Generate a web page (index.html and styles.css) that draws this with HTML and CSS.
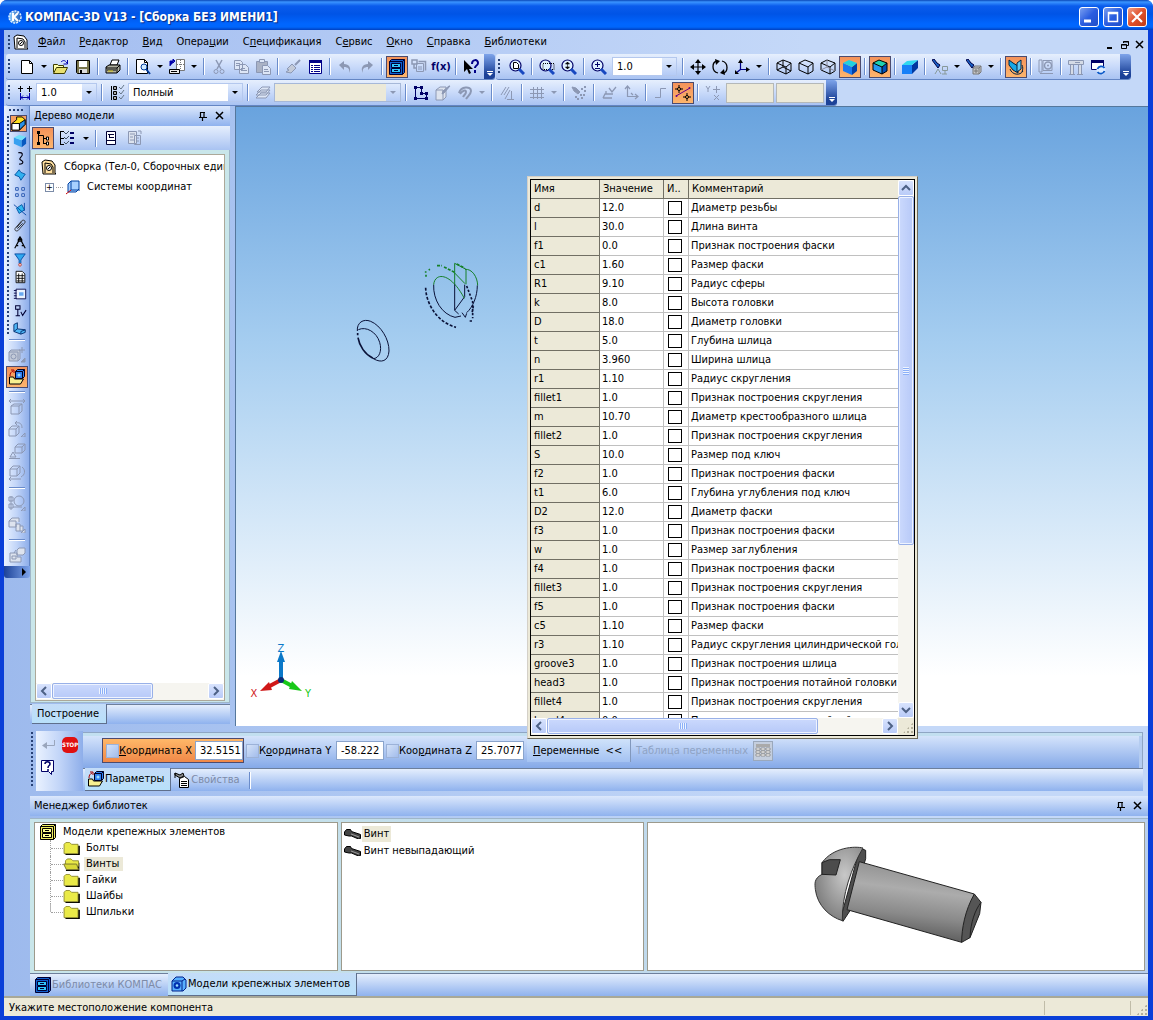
FILE: index.html
```html
<!DOCTYPE html>
<html lang="ru">
<head>
    <meta charset="UTF-8">
    <meta name="viewport" content="width=device-width, initial-scale=1.0">
    <title>КОМПАС-3D V13 - [Сборка БЕЗ ИМЕНИ1]</title>
    <link rel="stylesheet" href="styles.css">
</head>
<body>
    <!-- Icon sprite -->
    <svg class="sprite" aria-hidden="true">
        <defs>
            <linearGradient id="g-ball"><stop offset="0" stop-color="#8fd0ff"/><stop offset="1" stop-color="#1a58b8"/></linearGradient>
            <linearGradient id="g-shank" x1="0.6" y1="0" x2="0.4" y2="1"><stop offset="0" stop-color="#8a8a8a"/><stop offset="0.35" stop-color="#acacac"/><stop offset="0.65" stop-color="#8a8a8a"/><stop offset="1" stop-color="#505050"/></linearGradient>
            <radialGradient id="g-head" cx="0.62" cy="0.38" r="0.6"><stop offset="0" stop-color="#c8c8c8"/><stop offset="1" stop-color="#848484"/></radialGradient>
        </defs>
        <symbol id="logo" viewBox="0 0 16 16"><circle cx="8" cy="8" r="6" fill="url(#g-ball)" stroke="#dff1ff" stroke-width="1.5" stroke-dasharray="2 1"/><path d="M6 4v8M11 4l-4 4 4 4" stroke="#fff" stroke-width="2" fill="none"/></symbol>
        <symbol id="doc3d" viewBox="0 0 16 16"><path d="M1 3l3-2 7 1 3 4v8l1 1H2z" fill="#fff" stroke="#000"/><path d="M4 4v10M4 4l6 1 2 3v6" fill="none" stroke="#000"/><circle cx="8" cy="9" r="2.500" fill="none" stroke="#000"/><path d="M7 10l2-2" stroke="#000"/></symbol>
        <symbol id="doc3d-y" viewBox="0 0 16 16"><path d="M1 3l3-2 7 1 3 4v8l1 1H2z" fill="#ffe0a0" stroke="#000"/><path d="M4 4v10M4 4l6 1 2 3v6" fill="none" stroke="#000"/><circle cx="8" cy="9" r="2.500" fill="#fff" stroke="#000"/><path d="M7 10l2-2" stroke="#000"/></symbol>
        <symbol id="new" viewBox="0 0 16 16"><path d="M2.500 1.500h8l3 3v10h-11z" fill="#fff" stroke="#000"/><path d="M10.500 1.500v3h3" fill="none" stroke="#000"/></symbol>
        <symbol id="open" viewBox="0 0 16 16"><path d="M.5 13.500v-8h4l1 1h5v2" fill="#ffffb0" stroke="#3c3c00"/><path d="M.5 14.500l3-6h11l-3 6z" fill="#e8e070" stroke="#3c3c00"/><path d="M8 3c2-2 4-2 6 1M14.500 1v4h-4" fill="none" stroke="#00a"/></symbol>
        <symbol id="save" viewBox="0 0 16 16"><path d="M1.500 1.500h13v13h-12l-1-1z" fill="#77744a" stroke="#000"/><path d="M4 2h8v6H4z" fill="#fff"/><path d="M4 10h8v4H4z" fill="#ddd"/><path d="M5 11h2v3H5z"/></symbol>
        <symbol id="print" viewBox="0 0 16 16"><path d="M5 6l2-5h7l-2 5z" fill="#fff" stroke="#000"/><path d="M1 8l3-2h11v5l-3 3H1z" fill="#b0b0a0" stroke="#000"/><path d="M1 9h11v5M12 9l3-3M2 11h9" fill="none" stroke="#000"/><path d="M3 11.500h5v1H3z" fill="#e0d020"/></symbol>
        <symbol id="preview" viewBox="0 0 16 16"><path d="M1.500.5h8l3 3v11h-11z" fill="#fff" stroke="#000"/><path d="M9.500.5v3h3" fill="none" stroke="#000"/><circle cx="9" cy="8" r="3" fill="#cfeaff" stroke="#003a9a"/><path d="M11 10l4 5" stroke="#003a9a" stroke-width="2"/></symbol>
        <symbol id="plot" viewBox="0 0 16 16"><path d="M7.500.5h8v11h-8z" fill="#fff" stroke="#777"/><path d="M11.500 1v10M8 5.500h7" stroke="#777" stroke-dasharray="1 1"/><path d="M1 7V2h5M4 0v4l2-2z" fill="#00a" stroke="#00a"/><path d="M.5 10.500h10v4H.5z" fill="#eee" stroke="#000"/><path d="M2 12.500h6" stroke="#000"/></symbol>
        <symbol id="cut" viewBox="0 0 16 16"><path d="M5 1l5 9M11 1L6 10" stroke="currentColor" stroke-width="1.500"/><circle cx="5" cy="12.500" r="2" fill="none" stroke="currentColor"/><circle cx="11" cy="12.500" r="2" fill="none" stroke="currentColor"/></symbol>
        <symbol id="copy" viewBox="0 0 16 16"><path d="M1.500 1.500h6l2 2v7h-8zM6.500 5.500h6l3 3v6h-9z" fill="#dde6f6" stroke="currentColor"/><path d="M3 4.500h4M3 6.500h3M8 9.500h4M8 11.500h6" stroke="currentColor"/></symbol>
        <symbol id="paste" viewBox="0 0 16 16"><path d="M1.500 2.500h11v11h-11z" fill="#aab2c4" stroke="currentColor"/><path d="M4.500.5h5v3h-5z" fill="#dde6f6" stroke="currentColor"/><path d="M7.500 6.500h5l3 3v6h-8z" fill="#dde6f6" stroke="currentColor"/><path d="M9 10.500h4M9 12.500h5" stroke="currentColor"/></symbol>
        <symbol id="brush" viewBox="0 0 16 16"><path d="M15 1l-5 5" stroke="currentColor" stroke-width="2"/><path d="M7 5l4 4-5 5-5-1 3-2-2-1z" fill="#c3cad8" stroke="currentColor"/></symbol>
        <symbol id="props" viewBox="0 0 16 16"><path d="M2.500 1.500h12v13h-12z" fill="#fff" stroke="#008"/><path d="M2 1h13v3H2z" fill="#008"/><path d="M4 6.500h2M7 6.500h6M4 8.500h2M7 8.500h6M4 10.500h2M7 10.500h6M4 12.500h2M7 12.500h6" stroke="#008"/></symbol>
        <symbol id="undo" viewBox="0 0 16 16"><path d="M2 6l5-4v3c5 0 8 4 5 9 1-4-1-6-5-6v3z" fill="currentColor"/></symbol>
        <symbol id="redo" viewBox="0 0 16 16"><path d="M14 6L9 2v3c-5 0-8 4-5 9-1-4 1-6 5-6v3z" fill="currentColor"/></symbol>
        <symbol id="lib" viewBox="0 0 16 16"><path d="M.5 2.500l2-2h13v13l-2 2H.5z" fill="#1060d0" stroke="#003"/><path d="M.5 2.500h13v13M13.500 2.500l2-2" fill="none" stroke="#003"/><path d="M2.500 4.500h9v4h-9zM2.500 9.500h9v4h-9z" fill="#30c8ff" stroke="#003"/><path d="M5 6.500h4M5 11.500h4" stroke="#003"/></symbol>
        <symbol id="lib-y" viewBox="0 0 16 16"><path d="M.5 2.500l2-2h13v13l-2 2H.5z" fill="#f0ec60" stroke="#000"/><path d="M.5 2.500h13v13M13.500 2.500l2-2" fill="none" stroke="#000"/><path d="M2.500 4.500h9v4h-9zM2.500 9.500h9v4h-9z" fill="#ffff90" stroke="#000"/><path d="M5 6.500h4M5 11.500h4" stroke="#000"/></symbol>
        <symbol id="vars" viewBox="0 0 16 16"><path d="M5.500 4.500h7v8h-7z" fill="none" stroke="currentColor"/><path d="M7.500 2.500h7v9M1 1h5v4H1zM3 5v4h3" fill="none" stroke="currentColor" stroke-width="1.500"/><path d="M7 7h4v4H7z" fill="currentColor" opacity=".5"/></symbol>
        <symbol id="help" viewBox="0 0 16 16"><path d="M1 1v12l3-3 2 5 2-1-2-4h4z"/><path d="M9 5c0-5 6-5 6-1 0 3-3 2-3 5M12 11v3" fill="none" stroke="#008" stroke-width="2"/></symbol>
        <symbol id="zoom-doc" viewBox="0 0 16 16"><circle cx="6.500" cy="6.500" r="5.500" fill="#dff0ff" stroke="#006" stroke-width="1.200"/><path d="M4.500 3.500h3l2 2v4h-5z" fill="#fff" stroke="#000"/><path d="M10 10l5 5" stroke="#1848c0" stroke-width="3"/></symbol>
        <symbol id="zoom-rect" viewBox="0 0 16 16"><circle cx="6.500" cy="6.500" r="5.500" fill="#dff0ff" stroke="#006" stroke-width="1.200"/><path d="M4 4.500h11v6H4z" fill="none" stroke="#000" stroke-dasharray="1 1"/><path d="M10 10l5 5" stroke="#1848c0" stroke-width="3"/></symbol>
        <symbol id="zoom-ud" viewBox="0 0 16 16"><circle cx="6.500" cy="6.500" r="5.500" fill="#dff0ff" stroke="#006" stroke-width="1.200"/><path d="M6.500 3v7M4.500 5l2-2 2 2zM4.500 8l2 2 2-2z" stroke="#000" stroke-width=".6"/><path d="M10 10l5 5" stroke="#1848c0" stroke-width="3"/></symbol>
        <symbol id="zoom-pm" viewBox="0 0 16 16"><circle cx="6.500" cy="6.500" r="5.500" fill="#dff0ff" stroke="#006" stroke-width="1.200"/><path d="M6.500 3v5M4 5.500h5M4 9.500h5" stroke="#006"/><path d="M10 10l5 5" stroke="#1848c0" stroke-width="3"/></symbol>
        <symbol id="move" viewBox="0 0 16 16"><path d="M8 2v12M2 8h12" stroke="#000" stroke-width="1.200"/><path d="M5 4l3-4 3 4zM5 12l3 4 3-4zM4 5L0 8l4 3zM12 5l4 3-4 3z"/></symbol>
        <symbol id="rotate" viewBox="0 0 16 16"><path d="M6 14C-1 12 0 3 5 2M10 2c7 2 6 11 1 12" fill="none" stroke="#000" stroke-width="1.300"/><path d="M3 0l5 2-4 4zM13 16l-5-2 4-4z"/></symbol>
        <symbol id="axes" viewBox="0 0 16 16"><path d="M6.500 2v8.500H14M6.500 10.500L2 14" fill="none" stroke="#008" stroke-width="1.200"/><path d="M4 4l2.500-4L9 4zM12 8l4 2.500-4 2.500zM1 15v-4l4 4z"/></symbol>
        <symbol id="cube-w" viewBox="0 0 16 16"><path d="M1 4l6-3 8 3v8l-5 3-9-4zM1 4l9 4 5-4M10 8v7M7 1v7l8 4M7 8l-6 3" fill="none" stroke="#000"/></symbol>
        <symbol id="cube-n" viewBox="0 0 16 16"><path d="M1 4l6-3 8 3v8l-5 3-9-4zM1 4l9 4 5-4M10 8v7" fill="none" stroke="#000"/></symbol>
        <symbol id="cube-d" viewBox="0 0 16 16"><path d="M1 4l6-3 8 3v8l-5 3-9-4zM1 4l9 4 5-4M10 8v7" fill="none" stroke="#000"/><path d="M7 1v7l8 4M7 8l-6 3" fill="none" stroke="#889"/></symbol>
        <symbol id="cube-s" viewBox="0 0 16 16"><path d="M1 4l9 4v8l-9-4z" fill="#1878f0"/><path d="M10 8l5-4v8l-5 4z" fill="#0040a8"/><path d="M1 4l6-3 8 3-5 4z" fill="#20d0e0"/></symbol>
        <symbol id="cube-e" viewBox="0 0 16 16"><path d="M1 4l9 4v7l-9-4z" fill="#2898f0"/><path d="M10 8l5-4v8l-5 3z" fill="#0050b8"/><path d="M1 4l6-3 8 3-5 4z" fill="#20d0b0"/><path d="M1 4l6-3 8 3v8l-5 3-9-4zM1 4l9 4 5-4M10 8v7" fill="none" stroke="#000"/></symbol>
        <symbol id="persp" viewBox="0 0 16 16"><path d="M0 6h10v9H0z" fill="#1880f8"/><path d="M10 6l6-5v8l-6 6z" fill="#0038a0"/><path d="M0 6l5-4 11-1-6 5z" fill="#30d8f0"/></symbol>
        <symbol id="torch" viewBox="0 0 16 16"><path d="M0 1l2-1 3 4 3 2-2 3-3-4z" fill="#1860c8" stroke="#004"/><path d="M10.500 7.500h5v4h-5zM13 11v4M10 15h5M3 15l3-5 3 5" fill="none" stroke="#899"/></symbol>
        <symbol id="torch2" viewBox="0 0 16 16"><path d="M0 1l2-1 3 4 3 2-2 3-3-4z" fill="#1860c8" stroke="#004"/><path d="M7 9l2-2h6v6l-2 2H7zM7 9h6v6M13 9l2-2M9 11h2v2H9z" fill="#c8c8c8" stroke="#777"/></symbol>
        <symbol id="explode" viewBox="0 0 16 16"><path d="M1 1l4 3 5 3v7l-5-3-4-5z" fill="#18a8e8" stroke="#024"/><path d="M9 4l4-3v9l-4 3z" fill="#60c8f4" stroke="#024"/><path d="M2 10c2 6 10 7 13 2M14 6c1 2 1 4 0 7" fill="none" stroke="#024"/></symbol>
        <symbol id="gear" viewBox="0 0 16 16"><path d="M1 1h3v12H1zM5 1.500h9v10H5zM2 14.500h13" fill="none" stroke="currentColor"/><circle cx="10" cy="6.500" r="3.500" fill="none" stroke="currentColor" stroke-width="1.500"/><circle cx="10" cy="6.500" r="1" fill="currentColor"/></symbol>
        <symbol id="crane" viewBox="0 0 16 16"><path d="M.5 1.500h15v4H.5zM2.500 5.500h3v10h-3zM10.500 5.500h3v10h-3zM1 15.500h6M9 15.500h6M7 3.500h5" fill="#d5dbe6" stroke="currentColor"/></symbol>
        <symbol id="refresh" viewBox="0 0 16 16"><path d="M1.500 1.500h12v9h-12z" fill="#fff" stroke="#006"/><path d="M1 1h13v3H1z" fill="#006"/><circle cx="11" cy="11" r="4.500" fill="#dcebff"/><path d="M7.500 10a4 4 0 0 1 7-1M14.500 12a4 4 0 0 1-7 1" fill="none" stroke="#0a58c8" stroke-width="1.800"/></symbol>

        <symbol id="step" viewBox="0 0 16 16"><path d="M3.500 1v6M1 3.500h5M12.500 1v6M10 3.500h5" stroke="#000"/><path d="M3.500 8v7M12.500 8v7M4 12.500h8M6 10.500l-2 2 2 2M10 10.500l2 2-2 2" fill="none" stroke="#00a"/></symbol>
        <symbol id="levels" viewBox="0 0 16 16"><path d="M2.500 1v14" stroke="#000"/><path d="M4.500 1.500h3v3h-3zM4.500 6.500h3v3h-3zM4.500 11.500h3v3h-3z" fill="#aaa" stroke="#000"/><path d="M10 2l2 2 3-4M10 7l2 2 3-4M10 12l2 2 3-4" fill="none" stroke="#678"/></symbol>
        <symbol id="layers" viewBox="0 0 16 16"><path d="M1 13l5-5h9l-4 5zM1 10l5-5h9l-4 5zM2 7l5-5h8l-4 5z" fill="#dde6f6" stroke="currentColor"/></symbol>
        <symbol id="sketch" viewBox="0 0 16 16"><path d="M2.500 2.500h6v6h5v5h-11z" fill="none" stroke="#006"/><path d="M1 1h3v3H1zM7 1h3v3H7zM7 7h3v3H7zM12 7h3v3h-3zM1 12h3v3H1zM12 12h3v3h-3z" fill="#006"/></symbol>
        <symbol id="edit" viewBox="0 0 16 16"><path d="M1 5l4-3h6v10l-3 3H1zM1 5h7v10" fill="#dde3ee" stroke="currentColor"/><path d="M15 1l-6 7-2 1 1-3 6-5z" fill="currentColor" stroke="currentColor"/></symbol>
        <symbol id="magnet" viewBox="0 0 16 16"><path d="M2 8C4 1 14 1 14 6c0 3-3 5-5 8M3 9c2-3 6-5 6-2 0 2-2 3-3 5" fill="none" stroke="currentColor" stroke-width="2"/></symbol>
        <symbol id="round" viewBox="0 0 16 16"><path d="M2 10l5-8M5 10l5-8M6 14l5-9M12.500 6v8M8 14.500h7" fill="none" stroke="currentColor"/></symbol>
        <symbol id="grid" viewBox="0 0 16 16"><path d="M4.500 2v12M8.500 2v12M12.500 2v12M1 4.500h14M1 8.500h14M1 12.500h14" stroke="currentColor"/></symbol>
        <symbol id="spray" viewBox="0 0 16 16"><path d="M1 2l4 1 4 4-2 2-4-3z" fill="currentColor" stroke="currentColor"/><path d="M10 4h2M13 6h2M9 10h2M12 10h2M10 13h2M6 14h2M13 2h2M4 12h2" stroke="currentColor" stroke-width="2"/></symbol>
        <symbol id="plane" viewBox="0 0 16 16"><path d="M2 13h9M2 13l2-4h8M5 9V6M8 3l3 4 4-5" fill="none" stroke="currentColor" stroke-width="1.300"/></symbol>
        <symbol id="lcs" viewBox="0 0 16 16"><path d="M4.500 2v9.500H15M2 4l2.500-3L7 4M12 9l3 2.500-3 2.500M8 8l2 2" fill="none" stroke="currentColor" stroke-width="1.200"/></symbol>
        <symbol id="ortho" viewBox="0 0 16 16"><path d="M2 12.500h5.500v-9H13" fill="none" stroke="currentColor"/></symbol>
        <symbol id="snap" viewBox="0 0 16 16"><path d="M4 0v8M0 4h8M12 8v8M8 12h8" stroke="#000"/><circle cx="4" cy="4" r="1.500" fill="#ffb060" stroke="#000"/><circle cx="12" cy="12" r="1.500" fill="#ffb060" stroke="#000"/><path d="M1 11l14-8" fill="none" stroke="#608"/><circle cx="1.500" cy="11" r="1" fill="#608"/><circle cx="14.500" cy="3" r="1" fill="#608"/></symbol>
        <symbol id="xy" viewBox="0 0 16 16"><path d="M1 1l2 3 2-3M3 4v3M9 10l5 5M14 10l-5 5M11.500 1v7M8 4.500h7" fill="none" stroke="currentColor"/></symbol>

        <symbol id="r-edit" viewBox="0 0 16 16"><path d="M1 8l5-4v-3h6l3 3v5l-6 6H1z" fill="#ffe020" stroke="#000"/><path d="M1 8h8v7H1z" fill="#fff" stroke="#000"/><path d="M9 8l6-4v5l-6 6z" fill="#2890e8" stroke="#000"/></symbol>
        <symbol id="r-solid" viewBox="0 0 16 16"><path d="M1 4l9 3v8l-9-4z" fill="#38a0f0"/><path d="M10 7l5-4v8l-5 4z" fill="#0858c0"/><path d="M1 4l6-3 8 2-5 4z" fill="#70e0f8"/></symbol>
        <symbol id="r-curve" viewBox="0 0 16 16"><path d="M6 2c5-1 6 2 3 5s0 3 2 5c1 2-1 3-4 3" fill="none" stroke="#001" stroke-width="1.300"/></symbol>
        <symbol id="r-surf" viewBox="0 0 16 16"><path d="M2 8l5-6 2 3 5 2-5 7-2-4z" fill="#30b0f0" stroke="#0050a0"/></symbol>
        <symbol id="r-arr" viewBox="0 0 16 16"><path d="M3 3h3v3H3zM10 3h3v3h-3zM3 10h3v3H3zM10 10h3v3h-3z" fill="#d0e4ff" stroke="#1848a8"/></symbol>
        <symbol id="r-aux" viewBox="0 0 16 16"><path d="M4 7l6-4 3 6-6 4z" fill="#30b8f0" stroke="#0050a0"/><path d="M1 3l14 12M13 1v9" stroke="#0040a0"/></symbol>
        <symbol id="r-clip" viewBox="0 0 16 16"><path d="M13 5l-7 8c-3 2-5-1-3-3l7-8c3-2 5 1 3 3M11 5l-6 6M10 3L4 10" fill="none" stroke="#222"/></symbol>
        <symbol id="r-meas" viewBox="0 0 16 16"><path d="M8 3L2 14M8 3l6 11M6 4l2-3 2 3v2H6zM4 11h2M10 11h2" fill="none" stroke="#000" stroke-width="1.300"/></symbol>
        <symbol id="r-filt" viewBox="0 0 16 16"><path d="M2 1h12l-5 7v4H7V8z" fill="#30a8f0" stroke="#0048a0"/><circle cx="8" cy="13.500" r="1.500" fill="#fff" stroke="#c03020"/></symbol>
        <symbol id="r-spec" viewBox="0 0 16 16"><path d="M3.500 1.500h7l3 3v10h-10z" fill="#fff" stroke="#000"/><path d="M4 6.500h9M4 9.500h9M4 12.500h9M6.500 4v10M10.500 4v10" stroke="#000"/></symbol>
        <symbol id="r-rep" viewBox="0 0 16 16"><path d="M3.500 2.500h11v11h-11z" fill="#eaf3ff" stroke="#004"/><path d="M1 4h3M1 7h3M1 10h3M1 13h3" stroke="#004"/><path d="M7 6h5v4H7z" fill="#68a8f0"/></symbol>
        <symbol id="r-dim" viewBox="0 0 16 16"><path d="M3 2h5v4H3zM5.500 6v7M3 13.500h5M9 9l2 4 4-6" fill="none" stroke="#003" stroke-width="1.200"/></symbol>
        <symbol id="r-sheet" viewBox="0 0 16 16"><path d="M1 4l4-2v7l9 1v3l-5 2-8-3z" fill="#50b8f8" stroke="#002868"/><path d="M5 9l-4 3M9 15v-3l5-2" fill="none" stroke="#002868"/></symbol>
        <symbol id="r-addd" viewBox="0 0 18 16"><path d="M1 5l2-2h9v9l-2 2H1zM1 5h9v9" fill="#c3cad8" stroke="currentColor"/><circle cx="5.500" cy="9.500" r="2.500" fill="none" stroke="currentColor"/><path d="M14 0v6M11 3h6M17 11v4h-4z" stroke="currentColor" fill="currentColor"/></symbol>
        <symbol id="addf" viewBox="0 0 16 16"><path d="M.5 15V8h4l1 2h9l-3 5z" fill="#f8f090" stroke="#000"/><path d="M6.500 2.500l2-2h7v7l-2 2h-7z" fill="#3080f0" stroke="#002"/><path d="M6.500 2.500h7v7M13.500 2.500l2-2" fill="none" stroke="#002"/><circle cx="10" cy="6" r="1.500" fill="#9df"/><path d="M1 7c0-3 1-4 3-5M2 1h3v3" fill="none" stroke="#a00"/></symbol>
        <symbol id="b-dist" viewBox="0 0 18 16"><path d="M3 7l3-2h8v7l-3 3H3zM3 7h8v8M11 7l3-2M1 2h16M3 0L1 2l2 2M15 0l2 2-2 2" fill="none" stroke="currentColor"/></symbol>
        <symbol id="b-rot" viewBox="0 0 18 16"><path d="M1 8l3-3h7v7l-3 3H1zM1 8h7v7M8 8l3-3M8 2c4-1 6 1 6 5M9 0L7 2l2 2M17 12v4h-4z" fill="none" stroke="currentColor"/></symbol>
        <symbol id="b-fix" viewBox="0 0 18 16"><path d="M7 4l3-3h7v6l-3 3H7zM7 4h7v6M14 4l3-3M5 9l-3 5h6zM1 15.500h11" fill="none" stroke="currentColor"/></symbol>
        <symbol id="b-move" viewBox="0 0 18 16"><path d="M2 4l3-3h7v7l-3 3H2zM2 4h7v7M9 4l3-3M14 2c4 3 3 8-1 10M1 14h12M3 12l-2 2 2 2" fill="none" stroke="currentColor"/></symbol>
        <symbol id="b-mate" viewBox="0 0 18 16"><circle cx="11" cy="6" r="5" fill="none" stroke="currentColor"/><path d="M1 2h4v4H1zM1 9h4v4H1zM3 1v14M17 12v4h-4zM5 12h9" fill="none" stroke="currentColor"/></symbol>
        <symbol id="b-cut" viewBox="0 0 18 16"><path d="M1 4l3-3h7v4M1 4h7v6H1zM8 7h4v7H8zM12 9h3v5h-3M17 12v4h-4z" fill="#dde3ee" stroke="currentColor"/></symbol>
        <symbol id="b-new" viewBox="0 0 18 16"><path d="M2 6h7v4h4v5H2zM4 9h4v3H4zM6 6l2-3M9 3l2-2h6v5l-2 2H9z" fill="#dde3ee" stroke="currentColor"/></symbol>

        <symbol id="tree" viewBox="0 0 16 16"><path d="M3.500 2v12M3.500 5.500h5v8M8 8.500h3M8 13.500h3" fill="none" stroke="#000"/><path d="M2 1h3v3H2zM2 12h3v3H2z" fill="#000"/><path d="M11.500 7h2v3h-2zM11.500 12h2v3h-2z" fill="#fff" stroke="#000"/></symbol>
        <symbol id="checks" viewBox="0 0 16 16"><path d="M1.500 1v14M1 1.500h4M1 8.500h4M1 14.500h4" stroke="#000"/><path d="M5 2l2 2 3-3M5 7l2 2 3-3M5 12l2 2 3-3" fill="none" stroke="#456"/><path d="M11 3h4M11 8h4M11 13h4" stroke="#006" stroke-width="2"/></symbol>
        <symbol id="sheet" viewBox="0 0 16 16"><path d="M3.500 1.500h9v13h-9z" fill="#fff" stroke="#003"/><path d="M3 10.500h10M5 4.500h3M6.500 4v4M7 7.500h4M8 4.500h3" stroke="#003"/></symbol>
        <symbol id="report" viewBox="0 0 16 16"><path d="M1.500 1.500h8v12h-8z" fill="#dde3ee" stroke="currentColor"/><path d="M3 4h5M3 7h3M3 10h5M7.500 5.500h6v9h-6zM9 8h3M9 11h3M11 1h3v3" fill="none" stroke="currentColor"/></symbol>
        <symbol id="cs" viewBox="0 0 16 16"><path d="M3 5l3-3h8v8l-3 3H3z" fill="#a8d0ff" stroke="#0040a0"/><path d="M6 2v9H15" fill="none" stroke="#0040a0"/><path d="M6 11l-5 4" stroke="#c00"/></symbol>
        <symbol id="pin" viewBox="0 0 10 10"><path d="M2.500 1v5M2 1.500h5M6 1v5M1 6.500h8M4.500 7v3" fill="none" stroke="#000" stroke-width="1.200"/></symbol>
        <symbol id="x" viewBox="0 0 10 10"><path d="M1 1l7 7M8 1L1 8" stroke="currentColor" stroke-width="1.500"/></symbol>
        <symbol id="left" viewBox="0 0 10 10"><path d="M7 1L3 5l4 4" fill="none" stroke="#4d6185" stroke-width="2"/></symbol>
        <symbol id="right" viewBox="0 0 10 10"><path d="M3 1l4 4-4 4" fill="none" stroke="#4d6185" stroke-width="2"/></symbol>
        <symbol id="up" viewBox="0 0 10 10"><path d="M1 7l4-4 4 4" fill="none" stroke="#4d6185" stroke-width="2"/></symbol>
        <symbol id="down" viewBox="0 0 10 10"><path d="M1 3l4 4 4-4" fill="none" stroke="#4d6185" stroke-width="2"/></symbol>
        <symbol id="enter" viewBox="0 0 16 16"><path d="M14.500 3v5.500H6" fill="none" stroke="#9aa6bc"/><path d="M7 5v7L2 8.500z" fill="#9aa6bc"/></symbol>
        <symbol id="query" viewBox="0 0 16 16"><path d="M1.500 1.500h12v11h-2v3l-3-3h-7z" fill="#fff" stroke="#006"/><path d="M5 5c0-3 5-3 5 0 0 2-2 1-2 4M8 10v2" fill="none" stroke="#006" stroke-width="1.500"/></symbol>
        <symbol id="tabprop" viewBox="0 0 16 16"><path d="M1 1l5 2 3-2 1 3-4 2-5-3z" fill="#888" stroke="#000"/><path d="M5.500 6.500l5-2 4 3v8h-9z" fill="#fff" stroke="#000"/><path d="M7 9.500h6M7 11.500h6M7 13.500h6M1 1v5" stroke="#000"/></symbol>
        <symbol id="table" viewBox="0 0 16 16"><path d="M1 1h14v3H1z" fill="#aaa"/><path d="M1 5h4v2H1zM6 5h4v2H6zM11 5h4v2h-4zM1 8h4v2H1zM6 8h4v2H6zM11 8h4v2h-4zM1 11h4v2H1zM6 11h4v2H6zM11 11h4v2h-4z" fill="#fff" stroke="#888" stroke-width=".8"/></symbol>
        <symbol id="folder" viewBox="0 0 17 14"><path d="M2 13.500h14.500V4" fill="none" stroke="#000" stroke-width="2"/><path d="M.5 12.500v-10l2-2h4l2 2h7v10z" fill="#eaea48" stroke="#908c30"/></symbol>
        <symbol id="folder-o" viewBox="0 0 18 14"><path d="M3 13.500h13.500V5" fill="none" stroke="#000" stroke-width="2"/><path d="M2.500 7v-4l2-2h4l2 2h6v6z" fill="#eaea48" stroke="#908c30"/><path d="M.5 6.500h14l2 6h-13z" fill="#d8d838" stroke="#77732c"/></symbol>
        <symbol id="bolt" viewBox="0 0 17 10"><path d="M.5 3l2-2.500h4l1 2 9 3v4l-2 .5-7-3H5L.5 6z" fill="#444" stroke="#000"/><path d="M7 5l8 3" stroke="#999"/></symbol>
        <symbol id="model" viewBox="0 0 16 16"><path d="M1 5l4-4h7l3 3v8l-3 3H1z" fill="#58b0ff" stroke="#00218a"/><path d="M1 5h10v10M11 5l3-2" fill="none" stroke="#00218a"/><circle cx="6" cy="9.500" r="3.500" fill="#0030b0"/><circle cx="6" cy="9.500" r="1.300" fill="#9df"/></symbol>
    </svg>

    <div class="window">
        <header class="titlebar">
            <svg class="ic"><use href="#logo"/></svg>
            <h1>КОМПАС-3D V13 - [Сборка БЕЗ ИМЕНИ1]</h1>
            <button class="win-btn" aria-label="Свернуть"><svg viewBox="0 0 18 18"><path d="M4 13h7" stroke="#fff" stroke-width="3"/></svg></button>
            <button class="win-btn" aria-label="Развернуть"><svg viewBox="0 0 18 18"><path d="M4.500 4.500h9v9h-9zM4 5.500h10" fill="none" stroke="#fff" stroke-width="1.500"/></svg></button>
            <button class="win-btn close" aria-label="Закрыть"><svg viewBox="0 0 18 18"><path d="M4 4l10 10M14 4L4 14" stroke="#fff" stroke-width="2.200"/></svg></button>
        </header>

        <nav class="menubar">
            <i class="grip"></i>
            <svg class="ic"><use href="#doc3d"/></svg>
            <a href="#"><u>Ф</u>айл</a>
            <a href="#"><u>Р</u>едактор</a>
            <a href="#"><u>В</u>ид</a>
            <a href="#">Опера<u>ц</u>ии</a>
            <a href="#">С<u>п</u>ецификация</a>
            <a href="#">С<u>е</u>рвис</a>
            <a href="#"><u>О</u>кно</a>
            <a href="#"><u>С</u>правка</a>
            <a href="#"><u>Б</u>иблиотеки</a>
            <span class="mdi">
                <button aria-label="Свернуть окно"><svg viewBox="0 0 10 10"><path d="M2 8h5" stroke="#000" stroke-width="2"/></svg></button>
                <button aria-label="Восстановить окно"><svg viewBox="0 0 10 10"><path d="M3.500 3V1.500h5v4H7M1.500 4.500h5v4h-5zM3 2h6M1 5h6" fill="none" stroke="#000"/></svg></button>
                <button aria-label="Закрыть окно"><svg><use href="#x"/></svg></button>
            </span>
        </nav>

        <div class="bars">
            <div class="toolbar">
                <i class="grip"></i>
                <button class="tb" aria-label="Создать"><svg class="ic"><use href="#new"/></svg></button><i class="dd"></i>
                <button class="tb" aria-label="Открыть"><svg class="ic"><use href="#open"/></svg></button>
                <button class="tb" aria-label="Сохранить"><svg class="ic"><use href="#save"/></svg></button>
                <i class="sep"></i>
                <button class="tb" aria-label="Печать"><svg class="ic"><use href="#print"/></svg></button>
                <i class="sep"></i>
                <button class="tb" aria-label="Просмотр"><svg class="ic"><use href="#preview"/></svg></button><i class="dd"></i>
                <button class="tb" aria-label="Чертеж"><svg class="ic"><use href="#plot"/></svg></button><i class="dd"></i>
                <i class="sep"></i>
                <button class="tb" disabled aria-label="Вырезать"><svg class="ic"><use href="#cut"/></svg></button>
                <button class="tb" disabled aria-label="Копировать"><svg class="ic"><use href="#copy"/></svg></button>
                <button class="tb" disabled aria-label="Вставить"><svg class="ic"><use href="#paste"/></svg></button>
                <i class="sep"></i>
                <button class="tb" disabled aria-label="Копировать свойства"><svg class="ic"><use href="#brush"/></svg></button>
                <button class="tb" aria-label="Свойства"><svg class="ic"><use href="#props"/></svg></button>
                <i class="sep"></i>
                <button class="tb" disabled aria-label="Отменить"><svg class="ic"><use href="#undo"/></svg></button>
                <button class="tb" disabled aria-label="Повторить"><svg class="ic"><use href="#redo"/></svg></button>
                <i class="sep"></i>
                <button class="tb on" aria-label="Менеджер библиотек"><svg class="ic"><use href="#lib"/></svg></button>
                <button class="tb" disabled aria-label="Параметры"><svg class="ic"><use href="#vars"/></svg></button>
                <button class="tb fx" aria-label="Переменные">f(x)</button>
                <i class="sep"></i>
                <button class="tb" aria-label="Справка"><svg class="ic"><use href="#help"/></svg></button>
                <i class="more"></i>
            </div>
            <div class="toolbar">
                <i class="grip"></i>
                <button class="tb" aria-label="Показать все"><svg class="ic"><use href="#zoom-doc"/></svg></button>
                <i class="sep"></i>
                <button class="tb" aria-label="Увеличить рамкой"><svg class="ic"><use href="#zoom-rect"/></svg></button>
                <button class="tb" aria-label="Масштаб"><svg class="ic"><use href="#zoom-ud"/></svg></button>
                <i class="sep"></i>
                <button class="tb" aria-label="Изменить масштаб"><svg class="ic"><use href="#zoom-pm"/></svg></button>
                <span class="combo w-zoom"><select aria-label="Масштаб"><option>1.0</option></select><i class="dd"></i></span>
                <i class="sep"></i>
                <button class="tb" aria-label="Сдвинуть"><svg class="ic"><use href="#move"/></svg></button>
                <button class="tb" aria-label="Повернуть"><svg class="ic"><use href="#rotate"/></svg></button>
                <button class="tb" aria-label="Ориентация"><svg class="ic"><use href="#axes"/></svg></button><i class="dd"></i>
                <i class="sep"></i>
                <button class="tb" aria-label="Каркас"><svg class="ic"><use href="#cube-w"/></svg></button>
                <button class="tb" aria-label="Без невидимых линий"><svg class="ic"><use href="#cube-n"/></svg></button>
                <button class="tb" aria-label="Невидимые линии тонкие"><svg class="ic"><use href="#cube-d"/></svg></button>
                <button class="tb on" aria-label="Полутоновое"><svg class="ic"><use href="#cube-s"/></svg></button>
                <i class="sep"></i>
                <button class="tb on" aria-label="Полутоновое с каркасом"><svg class="ic"><use href="#cube-e"/></svg></button>
                <i class="sep"></i>
                <button class="tb" aria-label="Перспектива"><svg class="ic"><use href="#persp"/></svg></button>
                <i class="sep"></i>
                <button class="tb" aria-label="Скрыть"><svg class="ic"><use href="#torch"/></svg></button><i class="dd"></i>
                <button class="tb" aria-label="Скрыть тела"><svg class="ic"><use href="#torch2"/></svg></button><i class="dd"></i>
                <i class="sep"></i>
                <button class="tb on" aria-label="Упрощения"><svg class="ic"><use href="#explode"/></svg></button>
                <i class="sep"></i>
                <button class="tb" disabled aria-label="Перестроить"><svg class="ic"><use href="#gear"/></svg></button>
                <i class="sep"></i>
                <button class="tb" disabled aria-label="Разнести"><svg class="ic"><use href="#crane"/></svg></button>
                <button class="tb" aria-label="Обновить"><svg class="ic"><use href="#refresh"/></svg></button>
                <i class="more wide-gap"></i>
            </div>
        </div>

        <div class="bars">
            <div class="toolbar compact">
                <i class="grip"></i>
                <button class="tb" aria-label="Шаг курсора"><svg class="ic"><use href="#step"/></svg></button>
                <span class="combo w-step"><select aria-label="Шаг"><option>1.0</option></select><i class="dd"></i></span>
                <i class="sep"></i>
                <button class="tb" aria-label="Тип загрузки"><svg class="ic"><use href="#levels"/></svg></button>
                <span class="combo w-type"><select aria-label="Тип загрузки"><option>Полный</option></select><i class="dd"></i></span>
                <i class="sep"></i>
                <button class="tb" disabled aria-label="Слои"><svg class="ic"><use href="#layers"/></svg></button>
                <span class="combo off w-layer"><select aria-label="Слой" disabled></select><i class="dd"></i></span>
                <i class="sep"></i>
                <button class="tb" aria-label="Эскиз"><svg class="ic"><use href="#sketch"/></svg></button>
                <button class="tb" disabled aria-label="Редактировать"><svg class="ic"><use href="#edit"/></svg></button>
                <button class="tb" disabled aria-label="Привязки"><svg class="ic"><use href="#magnet"/></svg></button><i class="dd off"></i>
                <i class="sep"></i>
                <button class="tb" disabled aria-label="Округление"><svg class="ic"><use href="#round"/></svg></button>
                <i class="sep"></i>
                <button class="tb" disabled aria-label="Сетка"><svg class="ic"><use href="#grid"/></svg></button><i class="dd off"></i>
                <i class="sep"></i>
                <button class="tb" disabled aria-label="Параметрический режим"><svg class="ic"><use href="#spray"/></svg></button>
                <i class="sep"></i>
                <button class="tb" disabled aria-label="Плоскость"><svg class="ic"><use href="#plane"/></svg></button>
                <button class="tb" disabled aria-label="ЛСК"><svg class="ic"><use href="#lcs"/></svg></button>
                <i class="sep"></i>
                <button class="tb" disabled aria-label="Ортогонально"><svg class="ic"><use href="#ortho"/></svg></button>
                <button class="tb on" aria-label="Привязка"><svg class="ic"><use href="#snap"/></svg></button>
                <i class="sep"></i>
                <button class="tb" disabled aria-label="Координаты"><svg class="ic"><use href="#xy"/></svg></button>
                <input class="coord" type="text" aria-label="Координата по X" disabled>
                <input class="coord" type="text" aria-label="Координата по Y" disabled>
                <i class="more"></i>
            </div>
        </div>

        <div class="workspace">
            <!-- Compact panel -->
            <aside class="rail">
                <div class="rail-body">
                    <i class="rail-grip"></i>
                    <button class="rb on" aria-label="Редактирование сборки"><svg class="ic"><use href="#r-edit"/></svg></button>
                    <button class="rb" aria-label="Детали"><svg class="ic"><use href="#r-solid"/></svg></button>
                    <button class="rb" aria-label="Кривые"><svg class="ic"><use href="#r-curve"/></svg></button>
                    <button class="rb" aria-label="Поверхности"><svg class="ic"><use href="#r-surf"/></svg></button>
                    <button class="rb" aria-label="Массивы"><svg class="ic"><use href="#r-arr"/></svg></button>
                    <button class="rb" aria-label="Вспомогательная геометрия"><svg class="ic"><use href="#r-aux"/></svg></button>
                    <button class="rb" aria-label="Сопряжения"><svg class="ic"><use href="#r-clip"/></svg></button>
                    <button class="rb" aria-label="Измерения"><svg class="ic"><use href="#r-meas"/></svg></button>
                    <button class="rb" aria-label="Фильтры"><svg class="ic"><use href="#r-filt"/></svg></button>
                    <button class="rb" aria-label="Спецификация"><svg class="ic"><use href="#r-spec"/></svg></button>
                    <button class="rb" aria-label="Отчеты"><svg class="ic"><use href="#r-rep"/></svg></button>
                    <button class="rb" aria-label="Элементы оформления"><svg class="ic"><use href="#r-dim"/></svg></button>
                    <button class="rb" aria-label="Листовое тело"><svg class="ic"><use href="#r-sheet"/></svg></button>
                    <i class="rail-sep"></i>
                    <button class="tb" disabled aria-label="Создать деталь"><svg class="ic wide"><use href="#r-addd"/></svg></button>
                    <button class="tb on" aria-label="Добавить из файла"><svg class="ic"><use href="#addf"/></svg></button>
                    <i class="rail-sep"></i>
                    <button class="tb" disabled aria-label="Переместить"><svg class="ic wide"><use href="#b-dist"/></svg></button>
                    <button class="tb" disabled aria-label="Повернуть компонент"><svg class="ic wide"><use href="#b-rot"/></svg></button>
                    <button class="tb" disabled aria-label="Зафиксировать"><svg class="ic wide"><use href="#b-fix"/></svg></button>
                    <button class="tb" disabled aria-label="Переместить компонент"><svg class="ic wide"><use href="#b-move"/></svg></button>
                    <i class="rail-sep"></i>
                    <button class="tb" disabled aria-label="Сопряжение"><svg class="ic wide"><use href="#b-mate"/></svg></button>
                    <button class="tb" disabled aria-label="Вычитание"><svg class="ic wide"><use href="#b-cut"/></svg></button>
                    <i class="rail-sep"></i>
                    <button class="tb" disabled aria-label="Новый чертеж"><svg class="ic wide"><use href="#b-new"/></svg></button>
                </div>
                <div class="rail-end"></div>
            </aside>

            <div class="content">
                <div class="main">
                    <!-- Model tree -->
                    <section class="tree-panel">
                        <div class="panel-title">
                            <h2>Дерево модели</h2>
                            <button aria-label="Закрепить"><svg><use href="#pin"/></svg></button>
                            <button aria-label="Закрыть панель"><svg><use href="#x"/></svg></button>
                        </div>
                        <div class="tree-tools">
                            <button class="tb on" aria-label="Структура"><svg class="ic"><use href="#tree"/></svg></button>
                            <button class="tb" aria-label="Состав"><svg class="ic"><use href="#checks"/></svg></button><i class="dd"></i>
                            <i class="sep"></i>
                            <button class="tb" aria-label="Отношения"><svg class="ic"><use href="#sheet"/></svg></button>
                            <button class="tb" disabled aria-label="Отчет"><svg class="ic"><use href="#report"/></svg></button>
                        </div>
                        <div class="tree-frame">
                            <div class="tree-box">
                                <ul class="model-tree">
                                    <li><svg class="ic"><use href="#doc3d-y"/></svg><span>Сборка (Тел-0, Сборочных един</span></li>
                                    <li class="child"><button class="plus" aria-label="Развернуть узел">+</button><i class="dots"></i><svg class="ic"><use href="#cs"/></svg><span>Системы координат</span></li>
                                </ul>
                                <div class="hscroll">
                                    <button aria-label="Влево"><svg><use href="#left"/></svg></button>
                                    <div class="track"><div class="thumb tree-thumb"></div></div>
                                    <button aria-label="Вправо"><svg><use href="#right"/></svg></button>
                                </div>
                            </div>
                        </div>
                        <div class="tabs tree-tabs"><button class="tab active">Построение</button></div>
                    </section>

                    <!-- 3D view -->
                    <section class="canvas">
                        <svg class="wires" viewBox="0 0 480 390">
                            <g fill="none" stroke="#0a1238" stroke-width="3">
                                <path d="M52 243C50 218 70 205 92 214C122 226 148 268 147 303C145 334 124 340 100 326"/>
                                <path d="M55 239C78 228 110 246 119 277C127 303 117 326 99 326"/>
                                <path d="M53 249V256M54 263C58 288 75 313 99 325" stroke-width="5"/>
                                <path d="M281 104C279 150 306 193 345 202L363 198"/>
                                <path d="M344 100V181L374 140V104M344 181L356 192M366 188l10 14 4-12"/>
                                <path d="M412 106C412 140 398 172 380 188"/>
                                <path d="M380 108L398 155L398 205M400 168L396 190M389 213h8" stroke-dasharray="7 5" stroke-width="5"/>
                                <path d="M257 113C258 160 290 216 348 232" stroke-dasharray="9 5" stroke-width="5"/>
                            </g>
                            <g fill="none" stroke="#168028" stroke-width="3">
                                <path d="M281 104C284 68 330 64 373 145"/>
                                <path d="M344 100V40L378 58V103M343 68L375 101"/>
                                <path d="M375 58C396 56 412 80 413 106"/>
                                <path d="M291 47h15M312 51L344 67M257 68v-4M258 80v-6M266 60l4-2M350 42l24 12" stroke-dasharray="9 4" stroke-width="5"/>
                            </g>
                        </svg>
                        <svg class="axes" viewBox="0 0 70 64">
                            <path d="M33 40V20" stroke="#0a78c8" stroke-width="4"/><path d="M29 22l4-11 4 11z" fill="#0a78c8"/>
                            <path d="M33 40L18 48" stroke="#d01818" stroke-width="4"/><path d="M21 42l-9 9 12-1z" fill="#d01818"/>
                            <path d="M33 40l13 7" stroke="#18c818" stroke-width="4"/><path d="M44 41l-3 8 13 2z" fill="#18c818"/>
                            <circle cx="33" cy="40" r="3" fill="#0a2c78"/>
                            <text class="ax-z" x="33" y="12">Z</text><text class="ax-x" x="6" y="57">X</text><text class="ax-y" x="60" y="57">Y</text>
                        </svg>
                    </section>
                </div>

                <!-- Property bar -->
                <section class="params">
                    <i class="params-grip"></i>
                    <div class="params-ctl">
                        <svg class="ic"><use href="#enter"/></svg>
                        <button class="stop" aria-label="Прервать команду">STOP</button>
                        <button class="bare" aria-label="Справка"><svg class="ic"><use href="#query"/></svg></button>
                    </div>
                    <div class="params-main">
                        <div class="params-row">
                            <div class="field active"><input type="checkbox" aria-label="Фиксировать X"><label for="cx"><u>К</u>оордината X</label><input type="text" id="cx" value="32.5151"></div>
                            <div class="field"><input type="checkbox" aria-label="Фиксировать Y"><label for="cy">К<u>о</u>ордината Y</label><input type="text" id="cy" value="-58.222"></div>
                            <div class="field"><input type="checkbox" aria-label="Фиксировать Z"><label for="cz">Коо<u>р</u>дината Z</label><input type="text" id="cz" value="25.7077"></div>
                            <div class="vars">
                                <button class="vars-btn"><u>П</u>еременные&nbsp; &lt;&lt;</button>
                                <div class="vars-popup">
                                    <div class="vars-box">
                                        <div class="vars-view">
                                            <div class="vars-scroll">
                                                <table>
                                                    <thead><tr><th class="c-name">Имя</th><th class="c-val">Значение</th><th class="c-info">И..</th><th>Комментарий</th></tr></thead>
                                                    <tbody id="vars-body"></tbody>
                                                </table>
                                            </div>
                                            <div class="hscroll">
                                                <button aria-label="Влево"><svg><use href="#left"/></svg></button>
                                                <div class="track"><div class="thumb vars-hthumb"></div></div>
                                                <button aria-label="Вправо"><svg><use href="#right"/></svg></button>
                                            </div>
                                        </div>
                                        <div class="vars-side">
                                            <div class="vscroll">
                                                <button aria-label="Вверх"><svg><use href="#up"/></svg></button>
                                                <div class="track"><div class="thumb vars-vthumb"></div></div>
                                                <button aria-label="Вниз"><svg><use href="#down"/></svg></button>
                                            </div>
                                            <i class="resize"></i>
                                        </div>
                                    </div>
                                </div>
                            </div>
                            <span class="muted-text">Таблица переменных</span>
                            <button class="table-btn" disabled aria-label="Таблица переменных"><svg class="ic"><use href="#table"/></svg></button>
                        </div>
                        <div class="tabs">
                            <button class="tab active"><svg class="ic"><use href="#addf"/></svg>Параметры</button>
                            <button class="tab"><svg class="ic"><use href="#tabprop"/></svg>Свойства</button>
                            <i class="sep"></i>
                        </div>
                    </div>
                </section>

                <!-- Library manager -->
                <section class="library">
                    <div class="panel-title">
                        <h2>Менеджер библиотек</h2>
                        <button aria-label="Закрепить"><svg><use href="#pin"/></svg></button>
                        <button aria-label="Закрыть панель"><svg><use href="#x"/></svg></button>
                    </div>
                    <div class="lib-frame">
                        <div class="lib-box">
                            <div class="lib-root"><svg class="ic"><use href="#lib-y"/></svg><span>Модели крепежных элементов</span></div>
                            <ul class="lib-tree">
                                <li><svg><use href="#folder"/></svg><span>Болты</span></li>
                                <li><svg><use href="#folder-o"/></svg><span class="sel">Винты</span></li>
                                <li><svg><use href="#folder"/></svg><span>Гайки</span></li>
                                <li><svg><use href="#folder"/></svg><span>Шайбы</span></li>
                                <li><svg><use href="#folder"/></svg><span>Шпильки</span></li>
                            </ul>
                        </div>
                        <ul class="lib-box lib-list">
                            <li><svg><use href="#bolt"/></svg><span class="sel">Винт</span></li>
                            <li><svg><use href="#bolt"/></svg><span>Винт невыпадающий</span></li>
                        </ul>
                        <div class="lib-box preview">
                            <svg viewBox="0 0 720 390">
                                <path d="M240 48L257 55V80L212 233L189 268L183 255z" fill="#4e4e4e" stroke="#222" stroke-width="3"/>
                                <path d="M238 89L583 186L545 331L201 233z" fill="url(#g-shank)" stroke="#222" stroke-width="3"/>
                                <path d="M583 186L603 211L599 245L570 317L545 331C545 290 555 235 583 186z" fill="#555" stroke="#222" stroke-width="3"/>
                                <path d="M603 211C585 235 572 270 570 317" fill="none" stroke="#222" stroke-width="3"/>
                                <path d="M249 48C225 42 160 45 126 92V127C100 140 105 158 106 172C112 222 150 255 187 266C185 190 215 105 249 48z" fill="url(#g-head)" stroke="#333" stroke-width="3"/>
                                <path d="M126 92L148 83H181L168 129L126 127z" fill="#4c4c4c" stroke="#222" stroke-width="3"/>
                            </svg>
                        </div>
                    </div>
                    <div class="tabs lib-tabs">
                        <button class="tab"><svg class="ic"><use href="#lib"/></svg>Библиотеки КОМПАС</button>
                        <button class="tab active"><svg class="ic"><use href="#model"/></svg>Модели крепежных элементов</button>
                    </div>
                </section>
            </div>
        </div>

        <footer class="statusbar"><span>Укажите местоположение компонента</span><i></i><i class="last"></i><i class="resize"></i></footer>
    </div>

    <script>
        const variables = [
            ["d", "12.0", "Диаметр резьбы"],
            ["l", "30.0", "Длина винта"],
            ["f1", "0.0", "Признак построения фаски"],
            ["c1", "1.60", "Размер фаски"],
            ["R1", "9.10", "Радиус сферы"],
            ["k", "8.0", "Высота головки"],
            ["D", "18.0", "Диаметр головки"],
            ["t", "5.0", "Глубина шлица"],
            ["n", "3.960", "Ширина шлица"],
            ["r1", "1.10", "Радиус скругления"],
            ["fillet1", "1.0", "Признак построения скругления"],
            ["m", "10.70", "Диаметр крестообразного шлица"],
            ["fillet2", "1.0", "Признак построения скругления"],
            ["S", "10.0", "Размер под ключ"],
            ["f2", "1.0", "Признак построения фаски"],
            ["t1", "6.0", "Глубина углубления под ключ"],
            ["D2", "12.0", "Диаметр фаски"],
            ["f3", "1.0", "Признак построения фаски"],
            ["w", "1.0", "Размер заглубления"],
            ["f4", "1.0", "Признак построения фаски"],
            ["fillet3", "1.0", "Признак построения скругления"],
            ["f5", "1.0", "Признак построения фаски"],
            ["c5", "1.10", "Размер фаски"],
            ["r3", "1.10", "Радиус скругления цилиндрической гол"],
            ["groove3", "1.0", "Признак построения шлица"],
            ["head3", "1.0", "Признак построения потайной головки"],
            ["fillet4", "1.0", "Признак построения скругления"],
            ["head4", "0.0", "Признак построения потайной"]
        ];

        const body = document.getElementById("vars-body");
        variables.forEach(([name, value, comment]) => {
            body.innerHTML += `<tr><th>${name}</th><td>${value}</td><td class="c-info"><input type="checkbox" aria-label="${name}"></td><td>${comment}</td></tr>`;
        });
    </script>
</body>
</html>
```
FILE: styles.css
```css
* {
    box-sizing: border-box;
}

body {
    margin: 0;
    font-family: "DejaVu Sans Condensed", "DejaVu Sans", Tahoma, sans-serif;
    font-size: 11px;
    line-height: 14px;
    color: #000;
    background-color: #fff;
}

h1, h2, ul {
    margin: 0;
    padding: 0;
    font-size: 11px;
    font-weight: normal;
    list-style: none;
}

button, input, select {
    margin: 0;
    padding: 0;
    border: none;
    border-radius: 0;
    background: none;
    font: inherit;
    color: inherit;
}

svg {
    display: block;
    flex: none;
}

.sprite {
    position: absolute;
    width: 0;
    height: 0;
}

.ic {
    width: 16px;
    height: 16px;
}

.ic.wide {
    width: 18px;
}

.window {
    display: flex;
    flex-direction: column;
    min-height: 100vh;
    padding: 0 5px 4px 4px;
    border-radius: 7px 7px 0 0;
    background-color: #0a3fd8;
}

/* Title bar */
.titlebar {
    display: flex;
    align-items: center;
    gap: 4px;
    height: 30px;
    margin: 0 -5px 0 -4px;
    padding: 3px 6px 0 7px;
    border-radius: 7px 7px 0 0;
    background: linear-gradient(#0a48b8 0, #3a94ff 2px, #0a5cec 6px, #0054e6 14px, #0066ff 24px, #0066fc 27px, #0040c0 30px);
}

.titlebar .ic {
    margin-right: -4px;
}

.titlebar h1 {
    flex: 1;
    padding-left: 2px;
    font-size: 12px;
    font-weight: bold;
    color: #fff;
    text-shadow: 1px 1px 1px #0a2a80;
    white-space: nowrap;
}

.win-btn {
    width: 20px;
    height: 20px;
    border: 1px solid #fff;
    border-radius: 3px;
    background: linear-gradient(135deg, #7a9ff0, #2a5de0 50%, #2050c8);
}

.win-btn.close {
    background: linear-gradient(135deg, #f0a088, #e0502a 50%, #c03c18);
}

/* Menu */
.menubar {
    display: flex;
    align-items: center;
    height: 24px;
    padding-left: 4px;
    background: linear-gradient(to right, #a3bdf0, #c4d8f8 70%);
}

.menubar .grip {
    margin-right: 3px;
}

.menubar a {
    margin-left: 9px;
    margin-right: 5px;
    color: #000;
    text-decoration: none;
}

.mdi {
    display: flex;
    gap: 5px;
    margin-left: auto;
    padding: 6px 3px 0 0;
}

.mdi svg, .panel-title svg {
    width: 10px;
    height: 10px;
}

.grip {
    width: 2px;
    height: 15px;
    background: repeating-linear-gradient(#274176 0, #274176 2px, transparent 2px, transparent 4px);
}

/* Toolbars */
.bars {
    display: flex;
    height: 26px;
    padding-left: 2px;
    background: linear-gradient(to right, #b4caf4, #c4d8f8 70%);
}

.toolbar {
    display: flex;
    align-items: center;
    height: 26px;
    padding-left: 2px;
    border-bottom: 1px solid #6486c4;
    border-radius: 3px;
    background: linear-gradient(#e6effd, #c9dafa 50%, #a9c3f2);
}

.toolbar .grip {
    margin-right: 6px;
}

.toolbar.compact .grip {
    margin-right: 4px;
}

.toolbar + .toolbar {
    margin-left: 1px;
}

.tb {
    display: flex;
    align-items: center;
    justify-content: center;
    flex: none;
    width: 22px;
    height: 22px;
}

.tb:disabled {
    color: #8c98b4;
}

.tb.on {
    border: 1px solid #4b4b6f;
    background: linear-gradient(#f4925a, #fdb56c);
}

.fx {
    font-weight: bold;
    color: #006;
}

.dd {
    display: flex;
    align-items: center;
    justify-content: center;
    width: 12px;
    color: #000;
}

.dd::after {
    content: "";
    border: 3px solid transparent;
    border-top-color: currentColor;
    border-bottom: none;
}

.dd.off, .off .dd {
    color: #8c98b4;
}

.sep {
    width: 8px;
    height: 17px;
    background: linear-gradient(to right, transparent 3px, #6a8ccb 3px, #6a8ccb 4px, #fff 4px, #fff 5px, transparent 5px);
}

.more {
    display: flex;
    flex-direction: column;
    align-items: center;
    justify-content: flex-end;
    gap: 1px;
    align-self: stretch;
    width: 11px;
    margin-left: 2px;
    padding-bottom: 3px;
    border-radius: 0 3px 3px 0;
    background: linear-gradient(#7ea4ea, #1c4298 80%);
}

.more::before {
    content: "";
    width: 6px;
    height: 1px;
    background-color: #fff;
}

.more::after {
    content: "";
    border: 3px solid transparent;
    border-top-color: #fff;
    border-bottom: none;
}

.more.wide-gap {
    margin-left: 11px;
}

.combo {
    display: flex;
    height: 19px;
    margin: 0 2px;
    border: 1px solid #b4c8ee;
    background-color: #fff;
}

.compact .combo {
    margin: 0 1px 0 0;
}

.combo select {
    flex: 1;
    min-width: 0;
    padding-left: 4px;
    appearance: none;
}

.combo .dd {
    width: 14px;
    background: linear-gradient(#dfeafd, #b4cbf6);
}

.combo.off {
    border-color: #a6b8d8;
    background-color: #ece9d8;
}

.w-zoom { width: 65px; }
.w-step { width: 61px; }
.w-type { width: 115px; }
.w-layer { width: 127px; }

.coord {
    width: 48px;
    height: 20px;
    margin-left: 2px;
    border: 1px solid #b4b8b8;
    background-color: #ece9d8;
}

/* Workspace */
.workspace {
    display: flex;
    flex: 1;
    background: linear-gradient(to right, #9dbaed, #c4d8f8 70%);
}

.rail {
    width: 26px;
}

.rail-body {
    display: flex;
    flex-direction: column;
    align-items: center;
    padding-top: 3px;
    border-right: 1px solid #6486c4;
    background: linear-gradient(to right, #eaf2ff, #c2d5f8 50%, #8eaeea);
}

.rail-grip {
    width: 16px;
    height: 6px;
    background: repeating-linear-gradient(to right, #274176 0, #274176 2px, transparent 2px, transparent 4px) no-repeat 0 0 / 16px 2px;
}

.rb {
    display: flex;
    align-items: center;
    justify-content: flex-end;
    width: 22px;
    height: 17px;
    padding-right: 1px;
    background: repeating-linear-gradient(#274176 0, #274176 2px, transparent 2px, transparent 4px) no-repeat 1px 1px / 2px 14px;
}

.rb .ic {
    width: 14px;
    height: 14px;
}

.rb.on .ic {
    width: 17px;
    height: 17px;
    border: 1px solid #4b4b6f;
    background-color: #f8a060;
}

.rail-sep {
    width: 16px;
    height: 8px;
    background: linear-gradient(transparent 3px, #6a8ccb 3px, #6a8ccb 4px, #fff 4px, #fff 5px, transparent 5px);
}

.rail-end {
    display: flex;
    align-items: center;
    justify-content: flex-end;
    height: 12px;
    padding-right: 4px;
    border-radius: 0 0 3px 3px;
    background: linear-gradient(to right, #1c4298, #7ea4ea);
}

.rail-end::after {
    content: "";
    border: 4px solid transparent;
    border-left-color: #000;
    border-right: none;
}

.content {
    display: flex;
    flex: 1;
    flex-direction: column;
    min-width: 0;
}

.main {
    display: flex;
    flex: 1;
    gap: 5px;
}

.panel-title {
    display: flex;
    align-items: center;
    gap: 7px;
    height: 20px;
    padding: 0 5px 0 4px;
    background: linear-gradient(#dce8fc, #8fb2ee);
}

.panel-title h2 {
    flex: 1;
}

/* Model tree */
.tree-panel {
    display: flex;
    flex-direction: column;
    width: 200px;
}

.tree-tools {
    display: flex;
    align-items: center;
    height: 24px;
    padding-left: 2px;
    background: linear-gradient(#e6effd, #a9c3f2);
}

.tree-tools .tb {
    margin-right: 2px;
}

.tree-frame {
    display: flex;
    flex: 1;
    padding: 4px 4px 1px;
    border: 1px solid #9fb6c8;
    border-top: none;
    background-color: #c9e6ea;
}

.tree-box {
    display: flex;
    flex: 1;
    flex-direction: column;
    min-width: 0;
    overflow: hidden;
    border: 1px solid #aca899;
    background-color: #fff;
}

.model-tree {
    flex: 1;
    padding: 2px 0 0 5px;
    overflow: hidden;
}

.model-tree li {
    display: flex;
    align-items: center;
    gap: 7px;
    height: 20px;
    white-space: nowrap;
}

.model-tree .child {
    gap: 2px;
    padding-left: 4px;
}

.model-tree .child span {
    margin-left: 4px;
}

.plus {
    width: 9px;
    height: 9px;
    border: 1px solid #7b8ca8;
    font-size: 9px;
    line-height: 7px;
    text-align: center;
}

.dots {
    width: 7px;
    border-top: 1px dotted #a0a0a0;
}

/* Scroll bars */
.hscroll {
    display: flex;
    height: 17px;
    background-color: #f6f5f0;
}

.vscroll {
    display: flex;
    flex: 1;
    flex-direction: column;
    width: 16px;
    background-color: #f6f5f0;
}

.hscroll button, .vscroll button {
    display: flex;
    align-items: center;
    justify-content: center;
    width: 16px;
    height: 16px;
    border: 1px solid #fff;
    border-radius: 2px;
    background: linear-gradient(#d8e3fd, #b9cbf8);
}

.hscroll svg, .vscroll svg {
    width: 10px;
    height: 10px;
}

.track {
    flex: 1;
}

.thumb {
    display: flex;
    align-items: center;
    justify-content: center;
    border: 1px solid #98b0e8;
    border-radius: 2px;
    box-shadow: inset 0 0 0 1px #eef3ff;
}

.hscroll .thumb {
    height: 16px;
    background: linear-gradient(#cbd9fd, #b7c9f8);
}

.hscroll .thumb::after {
    content: "";
    width: 8px;
    height: 6px;
    background: repeating-linear-gradient(to right, #eef4fe 0, #eef4fe 1px, #8cb0f8 1px, #8cb0f8 2px);
}

.vscroll .thumb {
    background: linear-gradient(to right, #cbd9fd, #b7c9f8);
}

.vscroll .thumb::after {
    content: "";
    width: 6px;
    height: 8px;
    background: repeating-linear-gradient(#eef4fe 0, #eef4fe 1px, #8cb0f8 1px, #8cb0f8 2px);
}

.tree-thumb { width: 65%; }
.vars-hthumb { width: 81%; }
.vars-vthumb { height: 69%; }

/* Tabs */
.tabs {
    display: flex;
    height: 22px;
    border-top: 1px solid #6d7f9c;
    background: linear-gradient(#e4eefd, #8fb2ee);
}

.tab {
    display: flex;
    align-items: center;
    gap: 1px;
    padding: 0 6px 0 3px;
    color: #7d8ba8;
}

.tab.active {
    margin-top: -1px;
    border-right: 1px solid #5f6f8c;
    border-bottom: 1px solid #5f6f8c;
    background: linear-gradient(#c4dcf8, #b8e0fa);
    color: #000;
}

.tree-tabs {
    height: 20px;
    margin: 1px 0 2px;
}

.tree-tabs .tab {
    margin-left: 2px;
    padding: 0 7px 0 5px;
}

/* 3D view */
.canvas {
    position: relative;
    flex: 1;
    border-top: 1px solid #55779c;
    border-left: 1px solid #55779c;
    background: linear-gradient(#69a3de, #a5cdf0 38%, #fff 92%);
}

.wires {
    position: absolute;
    left: 104px;
    top: 143px;
    width: 160px;
    height: 130px;
}

.axes {
    position: absolute;
    left: 12px;
    bottom: 22px;
    width: 70px;
    height: 64px;
}

.axes text {
    font-size: 11px;
    text-anchor: middle;
}

.ax-z { fill: #0a78c8; }
.ax-x { fill: #d01818; }
.ax-y { fill: #18c818; }

/* Property bar */
.params {
    display: flex;
    height: 60px;
    margin: 5px 5px 5px 0;
}

.params-grip {
    width: 6px;
    background: repeating-linear-gradient(#274176 0, #274176 2px, transparent 2px, transparent 4px) no-repeat 1px 1px / 2px 56px;
}

.params-ctl {
    display: grid;
    grid-template-columns: 22px 22px;
    grid-template-rows: 22px 22px;
    width: 47px;
    padding-top: 3px;
    padding-left: 1px;
    align-items: center;
    justify-items: center;
    background: linear-gradient(to right, #eaf2ff, #c2d5f8 50%, #8eaeea);
}

.stop {
    width: 16px;
    height: 16px;
    border-radius: 5px;
    background-color: #e01010;
    font-size: 6px;
    font-weight: bold;
    line-height: 16px;
    color: #fff;
}

.params-main {
    display: flex;
    flex: 1;
    flex-direction: column;
}

.params-row {
    display: flex;
    align-items: center;
    height: 37px;
    margin-top: 1px;
    padding-left: 19px;
    border: 1px solid #8fa6c4;
    border-left: none;
    border-bottom: none;
    background: linear-gradient(#dce9fd, #85a9e8);
    box-shadow: inset 0 3px 0 #c2dff0, inset -3px 0 0 #b4ccf0;
}

.params-main .tabs {
    height: 23px;
    padding-left: 2px;
}

.params-main .sep {
    margin-top: 3px;
}

.field {
    display: flex;
    align-items: center;
    height: 25px;
    width: 140px;
    padding-left: 2px;
}

.field.active {
    width: 142px;
    padding-left: 3px;
    border: 1px solid #4b4b6f;
    background: linear-gradient(#ffb868, #f08848);
}

.field input[type="checkbox"] {
    width: 13px;
    height: 14px;
    border: 1px solid #9cb2d8;
    background: linear-gradient(135deg, #d4e2f8, #a2bcec);
    appearance: none;
}

.field label {
    flex: 1;
    white-space: nowrap;
}

.field input[type="text"] {
    width: 48px;
    height: 19px;
    padding-left: 4px;
    border: 1px solid #8aa4cc;
    background-color: #fff;
}

.vars {
    position: relative;
    margin-left: 3px;
}

.vars-btn {
    height: 23px;
    width: 104px;
    padding-left: 6px;
    border-right: 1px solid #8298bc;
    background: linear-gradient(#cfe2fa, #a4c2f2);
    text-align: left;
}

.vars-popup {
    position: absolute;
    left: 0;
    bottom: 100%;
    z-index: 5;
    width: 391px;
    padding: 2px;
    border: 1px solid #6c6a5c;
    border-top-color: #d4d0c8;
    border-left-color: #d4d0c8;
    background-color: #ece9d8;
}

.vars-box {
    display: flex;
    border: 1px solid #000;
    background-color: #ece9d8;
}

.vars-view {
    flex: 1;
    min-width: 0;
}

.vars-scroll {
    height: 538px;
    overflow: hidden;
    background-color: #fff;
}

.vars-side {
    display: flex;
    flex-direction: column;
}

table {
    width: 100%;
    table-layout: fixed;
    border-collapse: separate;
    border-spacing: 0;
}

th, td {
    height: 19px;
    padding: 0 0 0 2px;
    overflow: hidden;
    border-right: 1px solid #c0c0c0;
    border-bottom: 1px solid #c0c0c0;
    font-weight: normal;
    text-align: left;
    white-space: nowrap;
}

th {
    padding-left: 3px;
    border-color: #716f64;
    background-color: #ece9d8;
}

.c-name { width: 69px; }
.c-val { width: 64px; }
.c-info { width: 25px; }

td.c-info {
    padding-left: 4px;
}

td input {
    display: block;
    width: 14px;
    height: 14px;
    border: 1px solid #000;
    background-color: #fff;
    appearance: none;
}

td:last-child, th:last-child:not(:first-child) {
    border-right: none;
}

.resize {
    width: 16px;
    height: 17px;
    background: radial-gradient(circle, #b4b09c 1px, transparent 1px) 0 0 / 4px 4px;
    clip-path: polygon(100% 20%, 100% 100%, 20% 100%);
}

.muted-text {
    margin: 0 5px;
    color: #8fa3c4;
    white-space: nowrap;
}

.table-btn {
    display: flex;
    align-items: center;
    justify-content: center;
    width: 20px;
    height: 20px;
    border: 1px solid #9aa8bc;
    background-color: #c4cede;
}

/* Library manager */
.lib-frame {
    display: grid;
    grid-template-columns: 304fr 304fr 498fr;
    gap: 3px;
    height: 155px;
    margin-top: 2px;
    padding: 3px 3px 2px 4px;
    border-top: 1px solid #9fb6c8;
    background: linear-gradient(to right, #c9e6ea, #b8cfee);
}

.lib-box {
    border: 1px solid #9c9a8c;
    background-color: #fff;
}

.lib-root {
    display: flex;
    align-items: center;
    gap: 7px;
    height: 17px;
    padding: 1px 0 0 5px;
}

.lib-tree {
    margin-left: 15px;
}

.lib-tree li {
    display: flex;
    align-items: center;
    height: 16px;
    border-left: 1px dotted #a0a0a0;
}

.lib-tree li:last-child {
    border-image: linear-gradient(#b8b8b8 50%, transparent 50%) 1;
}

.lib-tree li::before {
    content: "";
    width: 12px;
    border-top: 1px dotted #a0a0a0;
}

.lib-tree svg {
    width: 17px;
    height: 13px;
    margin-right: 4px;
}

.lib-tree span {
    padding: 0 4px 0 2px;
}

.lib-tree .sel, .lib-list .sel {
    background-color: #ece9d8;
}

.lib-list {
    padding: 2px 0 0 2px;
}

.lib-list li {
    display: flex;
    align-items: center;
    height: 17px;
}

.lib-list svg {
    width: 17px;
    height: 10px;
    margin-right: 1px;
}

.lib-list span {
    padding: 1px 2px;
}

.preview {
    display: flex;
    align-items: center;
    justify-content: center;
}

.preview svg {
    width: 240px;
    height: 130px;
    margin-left: 8px;
}

.lib-tabs {
    height: 23px;
}

.lib-tabs .tab {
    padding-left: 5px;
}

.lib-tabs .tab.active {
    padding-left: 3px;
}

/* Status bar */
.statusbar {
    display: flex;
    align-items: center;
    height: 20px;
    padding: 2px 0 0 5px;
    border-top: 2px solid #a8a898;
    background-color: #ece9d8;
}

.statusbar span {
    flex: 1;
}

.statusbar i:not(.resize) {
    width: 86px;
    height: 14px;
    border-left: 1px solid #c0bca8;
}

.statusbar .last:not(.resize) {
    width: 2px;
}
```
